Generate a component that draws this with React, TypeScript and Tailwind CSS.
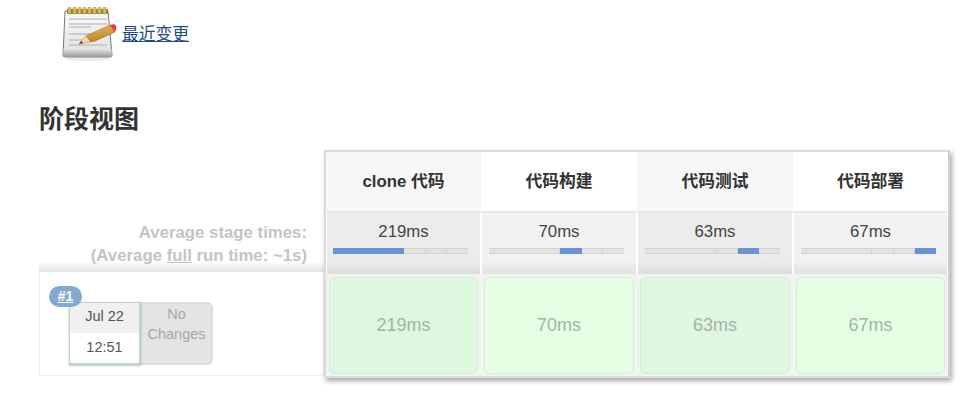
import React from 'react';

const FONT = '"Liberation Sans", "Noto Sans CJK SC", sans-serif';

interface Stage {
  name: string;
  ms: number;
}

const stages: Stage[] = [
  { name: 'clone 代码', ms: 219 },
  { name: '代码构建', ms: 70 },
  { name: '代码测试', ms: 63 },
  { name: '代码部署', ms: 67 },
];

// px width of each segment in the 135px timing bar
const segmentWidths = [71, 22, 21, 21];

const NotepadIcon: React.FC = () => (
  <svg width="56" height="54" viewBox="0 0 56 54" className="shrink-0">
    <defs>
      <linearGradient id="pad" x1="0" y1="0" x2="0" y2="1">
        <stop offset="0" stopColor="#fafafa" />
        <stop offset="1" stopColor="#dedede" />
      </linearGradient>
      <linearGradient id="band" x1="0" y1="0" x2="0" y2="1">
        <stop offset="0" stopColor="#e4e4e4" />
        <stop offset="1" stopColor="#9a9a9a" />
      </linearGradient>
      <linearGradient id="pencil" x1="0" y1="0" x2="0.3" y2="1">
        <stop offset="0" stopColor="#f0c264" />
        <stop offset="1" stopColor="#b97f24" />
      </linearGradient>
    </defs>
    <ellipse cx="26" cy="52" rx="22" ry="2" fill="#000" opacity="0.07" />
    <path d="M3 4h43l4 44q0 2-2 2H3q-2 0-2-2z" fill="url(#pad)" stroke="#7a7a7a" strokeWidth="1" />
    <path d="M1.500 42h48l0.500 6q0 2-2 2H3q-2 0-1.500-2z" fill="url(#band)" />
    <rect x="5" y="2" width="41" height="5" fill="#9a8f45" />
    {[7, 12, 17, 22, 27, 32, 37, 42].map((x) => (
      <rect key={x} x={x - 1} y="0" width="3" height="7" rx="1.500" fill="#dcc258" stroke="#857a35" strokeWidth="0.500" />
    ))}
    <path d="M7 12h38M7 17h38M7 20h22M7 27h28M7 33h22M7 38h38" stroke="#b0b0b0" strokeWidth="1" fill="none" />
    <path d="M17 37l7-8 24-11 5 7-20 9z" fill="url(#pencil)" stroke="#8a6320" strokeWidth="0.500" />
    <path d="M48 18q5-2 6 1t-1 6z" fill="#e8363a" />
    <path d="M17 37l7-8 4 6z" fill="#eed9ad" />
    <path d="M17 37l2.500-3 1.500 2z" fill="#333" />
  </svg>
);

const TimingBar: React.FC<{ active: number }> = ({ active }) => (
  <div className="flex h-[6px] w-[135px] bg-[#e2e2e2] border-y border-[#d4d4d4]">
    {segmentWidths.map((w, i) => (
      <div
        key={i}
        style={{ width: w }}
        className={i === active ? 'bg-[#6a93d0] -my-px' : 'border-r border-[#cfcfcf] last:border-r-0'}
      />
    ))}
  </div>
);

const App: React.FC = () => {
  return (
    <div className="w-[963px] h-[409px] bg-white overflow-hidden pl-[39px] pt-[8px] text-[#333]" style={{ fontFamily: FONT }}>
      <div className="flex items-center pl-[23px] h-[52px]">
        <NotepadIcon />
        <a href="#" className="ml-[4px] mt-[3px] text-[16.8px] leading-none underline text-[#204a87]">
          最近变更
        </a>
      </div>

      <h2 className="mt-[42px] text-[25px] leading-[34px] font-bold text-[#333]">阶段视图</h2>

      <div className="flex mt-[14px]">
        <div className="w-[285px] shrink-0 flex flex-col">
          <div className="h-[71px]" />
          <div className="h-[51px] pr-[17px] text-right text-[16.8px] leading-[23px] font-bold text-[#c4c4c4] bg-[linear-gradient(to_bottom,#ffffff_0px,#ffffff_40px,#e4e4e4_51px)]">
            <div>Average stage times:</div>
            <div>
              (Average <span className="underline">full</span> run time: ~1s)
            </div>
          </div>
          <div className="h-[104px] border border-t-0 border-[#efefef] pt-[30px]">
            <div className="relative ml-[29px] flex h-[63px]">
              <a
                href="#"
                className="absolute -left-[20px] -top-[16px] z-10 flex h-[21px] w-[33px] items-center justify-center rounded-full bg-[#84a9d1] text-[14px] font-bold text-white underline"
              >
                #1
              </a>
              <div className="relative w-[72px] h-[63px] border border-r-2 border-b-2 border-[#bcd3c8] bg-white shadow-[0_1px_2px_rgba(0,0,0,0.25)] text-[14.500px] text-[#555] text-center">
                <div className="h-[30px] bg-[#f0f0f0] leading-[26px]">Jul 22</div>
                <div className="leading-[28px]">12:51</div>
              </div>
              <div className="w-[72px] h-[63px] rounded-r-[6px] border-2 border-l-0 border-[#dcdcdc] bg-[#e4e4e4] text-center text-[14.500px] leading-[20px] text-[#a8a8a8]">
                <div className="pl-[1px]">
                  No
                  <br />
                  Changes
                </div>
              </div>
            </div>
          </div>
        </div>

        <div className="w-[626px] h-[228px] shrink-0 bg-[#eef5ee] border-2 border-[#dcdcdc] border-r-[#cfcfcf] shadow-[2px_3px_5px_rgba(0,0,0,0.35)] grid grid-cols-[155px_156px_156px_155px] grid-rows-[59px_63px_1fr]">
          {stages.map((s, i) => (
            <div
              key={s.name}
              className={`flex items-center justify-center text-[16.8px] font-bold text-[#333] ${
                i % 2 === 0 ? 'bg-[#f7f7f7]' : 'bg-white'
              }`}
            >
              {s.name}
            </div>
          ))}
          {stages.map((s, i) => (
            <div
              key={s.name}
              className={`flex flex-col items-center border-t-2 border-x border-t-[#e6e6e6] border-x-white pt-[9px] ${
                i % 2 === 0
                  ? 'bg-[linear-gradient(to_bottom,#ececec_0px,#ececec_48px,#dcdcdc_61px)]'
                  : 'bg-[linear-gradient(to_bottom,#f2f2f2_0px,#f2f2f2_48px,#e0e0e0_61px)]'
              }`}
            >
              <div className="text-[16.8px] leading-[20px] text-[#444]">{s.ms}ms</div>
              <div className={`mt-[6px] w-full ${i === 0 ? 'pl-[6px]' : 'pl-[7px]'}`}>
                <TimingBar active={i} />
              </div>
            </div>
          ))}
          {stages.map((s, i) => (
            <div key={s.name} className="px-[3px] pt-[3px] pb-[2px]">
              <div
                className={`h-full flex items-center justify-center rounded-[6px] border border-[#dde5dd] text-[18px] text-[#a8b0a8] ${
                  i % 2 === 0 ? 'bg-[#def7df]' : 'bg-[#e5ffe5]'
                }`}
              >
                {s.ms}ms
              </div>
            </div>
          ))}
        </div>
      </div>
    </div>
  );
};

export default App;
